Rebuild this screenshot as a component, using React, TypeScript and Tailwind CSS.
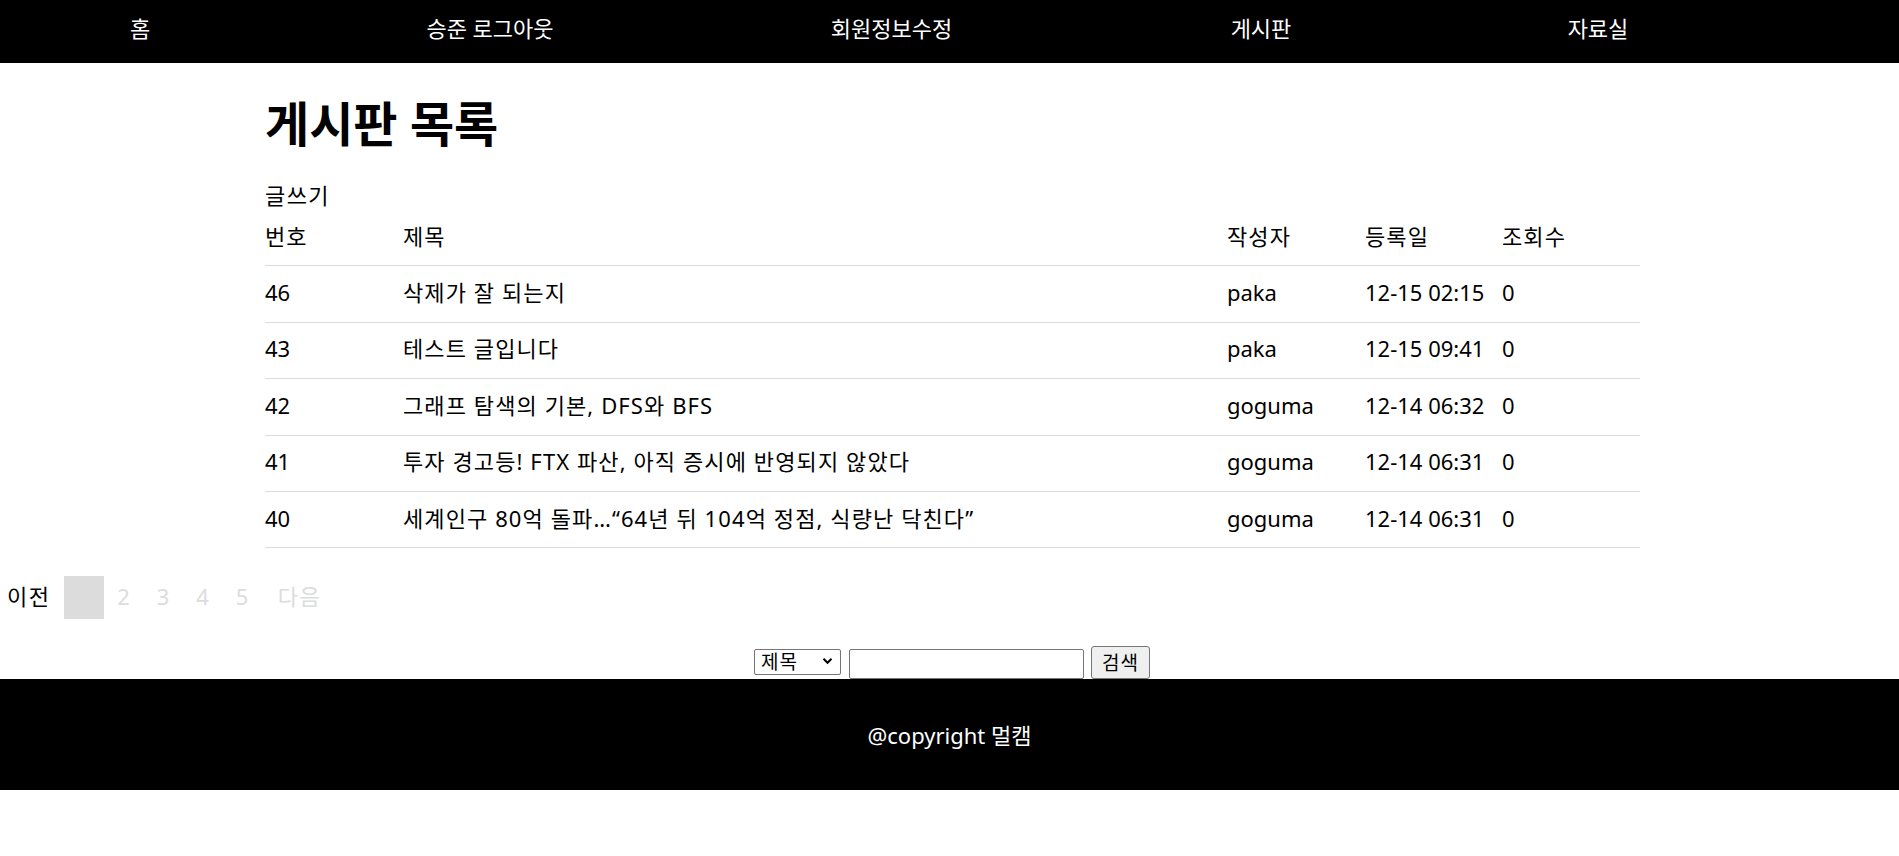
import React from "react";

const rows = [
  { no: "46", title: "삭제가 잘 되는지", writer: "paka", date: "12-15 02:15", hit: "0" },
  { no: "43", title: "테스트 글입니다", writer: "paka", date: "12-15 09:41", hit: "0" },
  { no: "42", title: "그래프 탐색의 기본, DFS와 BFS", writer: "goguma", date: "12-14 06:32", hit: "0" },
  { no: "41", title: "투자 경고등! FTX 파산, 아직 증시에 반영되지 않았다", writer: "goguma", date: "12-14 06:31", hit: "0" },
  { no: "40", title: "세계인구 80억 돌파…“64년 뒤 104억 정점, 식량난 닥친다”", writer: "goguma", date: "12-14 06:31", hit: "0" },
];

const font = { fontFamily: '"Noto Sans", "Noto Sans CJK KR", sans-serif' };

function Row({ cells, korean }: { cells: string[]; korean: boolean[] }) {
  return (
    <div className="grid grid-cols-[138px_824px_138px_137px_138px] h-[56.4px] items-center pb-[4px] border-b border-[#dadada]">
      {cells.map((c, i) => (
        <div
          key={i}
          className={"whitespace-nowrap leading-[26px] " + (korean[i] ? "tracking-[1.1px]" : "")}
        >
          {c}
        </div>
      ))}
    </div>
  );
}

export default function App() {
  return (
    <div className="min-h-[856px] bg-white text-black text-[22px]" style={font}>
      <nav className="h-[63px] bg-black text-white flex items-center pb-[7px] leading-[26px]">
        <span className="w-[280px] text-center whitespace-nowrap">홈</span>
        <span className="w-[420px] text-center whitespace-nowrap">승준 로그아웃</span>
        <span className="w-[383px] text-center whitespace-nowrap">회원정보수정</span>
        <span className="w-[356px] text-center whitespace-nowrap">게시판</span>
        <span className="w-[318px] text-center whitespace-nowrap">자료실</span>
      </nav>

      <main className="ml-[265px] w-[1375px]">
        <h1 className="mt-[35px] text-[48px] font-bold leading-[52px]">게시판 목록</h1>
        <div className="mt-[32px] mb-[2px] leading-[26px] tracking-[1.4px]">글쓰기</div>
        <Row
          cells={["번호", "제목", "작성자", "등록일", "조회수"]}
          korean={[true, true, true, true, true]}
        />
        {rows.map((r) => (
          <Row
            key={r.no}
            cells={[r.no, r.title, r.writer, r.date, r.hit]}
            korean={[false, true, false, false, false]}
          />
        ))}
      </main>

      <div className="mt-[28px] flex items-center h-[43px] pl-[7px] leading-[26px]">
        <span className="whitespace-nowrap tracking-[1.4px] pb-[4px]">이전</span>
        <div className="ml-[14px] flex">
          {["1", "2", "3", "4", "5"].map((n, i) => (
            <span
              key={n}
              className={
                "w-[39.5px] h-[43px] pb-[4px] flex items-center justify-center text-[#dcdcdc] " +
                (i === 0 ? "bg-[#dcdcdc]" : "")
              }
            >
              {n}
            </span>
          ))}
        </div>
        <span className="ml-[16px] whitespace-nowrap tracking-[1.4px] pb-[4px] text-[#dcdcdc]">다음</span>
      </div>

      <form className="mt-[27px] pl-[5px] flex justify-center items-end text-[19px] tracking-[1px]">
        <div className="relative mb-[3px]">
          <select className="appearance-none w-[87px] h-[26px] border border-[#767676] rounded-[2px] bg-white pl-[6px] leading-[22px]">
            <option>제목</option>
            <option>작성자</option>
            <option>내용</option>
          </select>
          <svg
            className="pointer-events-none absolute right-[8px] top-[9px]"
            width="11"
            height="8"
            viewBox="0 0 11 8"
          >
            <path d="M1.5 1.8 L5.5 5.8 L9.5 1.8" fill="none" stroke="#000" strokeWidth="2" />
          </svg>
        </div>
        <input
          type="text"
          className="ml-[8px] w-[235px] h-[30px] border border-[#767676] rounded-[2px] bg-white px-[3px]"
        />
        <button
          type="button"
          className="ml-[7px] w-[59px] h-[33px] border border-[#767676] rounded-[3px] bg-[#efefef] leading-[22px]"
        >
          검색
        </button>
      </form>

      <footer className="h-[111px] bg-black text-white flex items-center justify-center leading-[26px]">
        @copyright 멀캠
      </footer>
    </div>
  );
}
